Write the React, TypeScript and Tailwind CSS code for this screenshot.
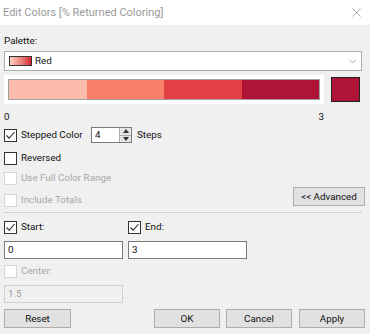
import { ChevronDown, X } from "lucide-react";

const Check = ({ checked, disabled }: { checked?: boolean; disabled?: boolean }) => (
  <span
    className={
      "flex h-[13px] w-[13px] shrink-0 items-center justify-center border bg-white " +
      (disabled ? "border-[#d6d6d6] bg-[#f7f7f7]" : "border-[#333333]")
    }
  >
    {checked && (
      <svg width="11" height="11" viewBox="0 0 11 11">
        <path d="M1.5 5.5 L4.2 8.2 L9.5 2" fill="none" stroke="#333" strokeWidth="1.1" />
      </svg>
    )}
  </span>
);

const CheckRow = ({
  label,
  checked,
  disabled,
}: {
  label: string;
  checked?: boolean;
  disabled?: boolean;
}) => (
  <div className="flex items-center gap-[4px]">
    <Check checked={checked} disabled={disabled} />
    <span className={disabled ? "text-[#a8a8a8]" : "text-[#111]"}>{label}</span>
  </div>
);

const Btn = ({ label, w }: { label: string; w: string }) => (
  <button className={"flex h-[19px] items-center justify-center border border-[#adadad] bg-[#e1e1e1] " + w}>
    {label}
  </button>
);

export default function App() {
  return (
    <div
      className="h-[334px] w-[370px] bg-[#f0f0f0] text-[9.8px] leading-[14px] text-[#111]"
      style={{ fontFamily: 'Roboto, "Noto Sans", sans-serif' }}
    >
      <div className="flex h-[25px] items-center justify-between bg-white pl-[3px] pr-[6px]">
        <span className="text-[11px] text-[#9a9a9a]">Edit Colors [% Returned Coloring]</span>
        <X size={15} strokeWidth={1} className="text-[#777]" />
      </div>

      <div className="flex flex-col px-[4px]">
        <div className="mt-[9px] h-[14px]">Palette:</div>

        <div className="mt-[3px] flex h-[20px] w-[358px] items-center border border-[#adadad] bg-white pl-[4px] pr-[3px]">
          <span className="h-[10px] w-[23px] border border-[#333] bg-gradient-to-r from-[#fdd0c4] to-[#d42030]" />
          <span className="ml-[3px] flex-1">Red</span>
          <ChevronDown size={11} strokeWidth={1.2} className="text-[#555]" />
        </div>

        <div className="mt-[4px] flex h-[29px] items-center gap-[7px]">
          <div className="flex h-[29px] w-[320px] items-center bg-white px-[4px]">
            <div className="flex h-[21px] w-full border border-[#a0a0a0]">
              <div className="flex-1 bg-[#fdbcab]" />
              <div className="flex-1 bg-[#fa806a]" />
              <div className="flex-1 bg-[#e33f47]" />
              <div className="flex-1 bg-[#ae1438]" />
            </div>
          </div>
          <div className="h-[25px] w-[29px] border border-[#222] bg-[#ae1438]" />
        </div>

        <div className="mt-[6px] flex h-[13px] w-[320px] items-center justify-between">
          <span>0</span>
          <span>3</span>
        </div>

        <div className="mt-[4px] flex h-[16px] items-center">
          <div className="w-[87px]">
            <CheckRow label="Stepped Color" checked />
          </div>
          <div className="flex h-[16px] w-[41px] items-stretch border border-[#7a7a7a] bg-white">
            <span className="flex flex-1 items-center pl-[3px]">4</span>
            <div className="flex w-[12px] flex-col border-l border-[#adadad] bg-[#e6e6e6]">
              <div className="flex flex-1 items-center justify-center border-b border-[#adadad]">
                <svg width="6" height="4" viewBox="0 0 6 4">
                  <path d="M0 4 L3 0 L6 4 Z" fill="#333" />
                </svg>
              </div>
              <div className="flex flex-1 items-center justify-center">
                <svg width="6" height="4" viewBox="0 0 6 4">
                  <path d="M0 0 L3 4 L6 0 Z" fill="#333" />
                </svg>
              </div>
            </div>
          </div>
          <span className="ml-[5px]">Steps</span>
        </div>

        <div className="mt-[8px] flex h-[14px] items-center">
          <CheckRow label="Reversed" />
        </div>

        <div className="mt-[6px] flex h-[14px] items-center">
          <CheckRow label="Use Full Color Range" disabled />
        </div>

        <div className="mt-[2px] flex h-[19px] items-end justify-between pr-[1px]">
          <div className="mb-[-1px]">
            <CheckRow label="Include Totals" disabled />
          </div>
          <Btn label="<< Advanced" w="w-[72px] self-start" />
        </div>

        <div className="mt-[6px] h-[2px] w-[358px] border-t border-[#d0d0d0] border-b-white" />

        <div className="mt-[6px] flex h-[14px] items-center">
          <div className="w-[124px]">
            <CheckRow label="Start:" checked />
          </div>
          <CheckRow label="End:" checked />
        </div>

        <div className="mt-[7px] flex h-[18px] gap-[5px]">
          <div className="flex w-[119px] items-center border border-[#7a7a7a] bg-white pl-[3px]">0</div>
          <div className="flex w-[119px] items-center border border-[#7a7a7a] bg-white pl-[3px]">3</div>
        </div>

        <div className="mt-[5px] flex h-[14px] items-center">
          <CheckRow label="Center:" disabled />
        </div>

        <div className="mt-[7px] flex h-[18px] w-[119px] items-center border border-[#d0d0d0] bg-[#f0f0f0] pl-[3px] text-[#9a9a9a]">
          1.5
        </div>

        <div className="mt-[6px] flex h-[19px] items-center">
          <Btn label="Reset" w="w-[67px]" />
          <div className="flex-1" />
          <Btn label="OK" w="w-[66px]" />
          <div className="w-[6px]" />
          <Btn label="Cancel" w="w-[66px]" />
          <div className="w-[7px]" />
          <Btn label="Apply" w="w-[66px]" />
          <div className="w-[1px]" />
        </div>
      </div>
    </div>
  );
}
